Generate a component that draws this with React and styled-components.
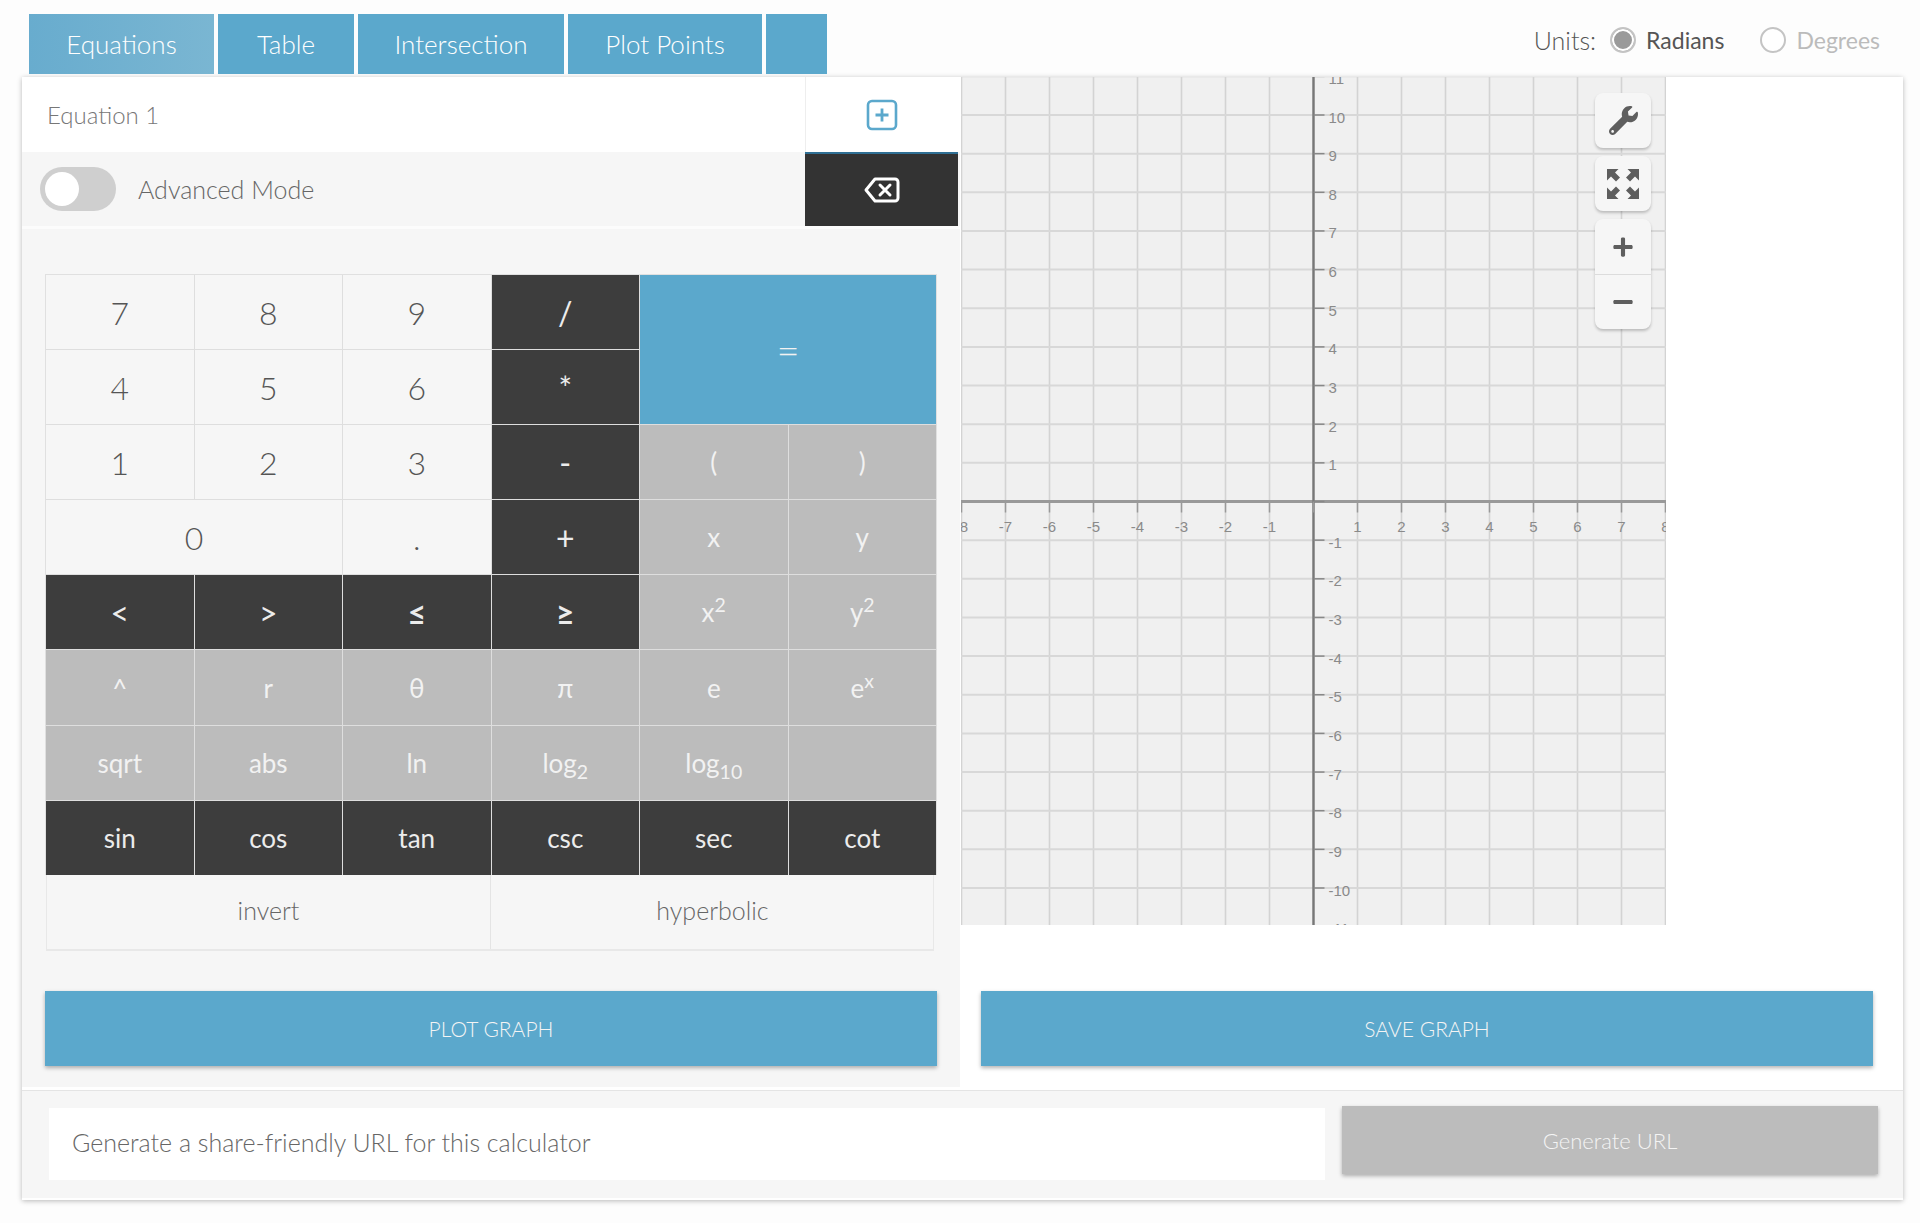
import React from 'react'
import styled, { createGlobalStyle } from 'styled-components'
import { FaWrench, FaPlus, FaMinus } from 'react-icons/fa'

const BLUE = '#5ba8cc'
const DARK = '#3d3d3d'
const GRAY = '#bcbcbc'
const LIGHT = '#f6f6f6'

const GlobalStyle = createGlobalStyle`
  html, body { margin: 0; padding: 0; background: #fdfdfd; }
  body { font-family: Lato, "Open Sans", sans-serif; font-weight: 300; color: #555; }
  * { box-sizing: border-box; }
  sup, sub { font-size: 0.75em; line-height: 0; }
`

const Page = styled.div`
  width: 1920px;
  height: 1223px;
  padding: 14px 0 0 22px;
`

const TopBar = styled.div`
  display: flex;
  justify-content: space-between;
  align-items: center;
  padding: 0 40px 0 7px;
`

const Tabs = styled.div`
  display: grid;
  grid-template-columns: 185px 136px 206px 194px 61px;
  gap: 4px;
`

const Tab = styled.button`
  height: 60px;
  border: none;
  padding: 0;
  color: #fff;
  font: 300 26px Lato, sans-serif;
  background: ${p => (p.$active ? 'linear-gradient(90deg, #68acce, #7ab6d2)' : BLUE)};
`

const Units = styled.div`
  display: flex;
  align-items: center;
  margin-bottom: 8px;
  font-size: 23px;
`

const UnitsLabel = styled.span`
  margin-right: 14px;
  font-size: 25px;
`

const Radio = styled.label`
  display: flex;
  align-items: center;
  gap: 10px;
  margin-left: ${p => (p.$off ? '36px' : '0')};
  color: ${p => (p.$off ? '#bbb' : '#555')};
  font-weight: 400;
`

const RadioDot = styled.span`
  width: 26px;
  height: 26px;
  border-radius: 50%;
  border: 2px solid #c4c4c4;
  background: ${p => (p.$checked ? '#9a9a9a' : '#fff')};
  box-shadow: ${p => (p.$checked ? 'inset 0 0 0 2px #fff' : 'none')};
`

const Panel = styled.div`
  width: 1881px;
  margin-top: 3px;
  background: #fff;
  box-shadow: 0 1px 5px rgba(0, 0, 0, 0.28);
`

const Columns = styled.div`
  display: grid;
  grid-template-columns: 938px 1fr;
  height: 1010px;
`

const LeftColumn = styled.div`
  background: ${LIGHT};
`

const EquationRow = styled.div`
  display: grid;
  grid-template-columns: 783px 153px;
  height: 75px;
  background: #fff;
`

const EquationInput = styled.input`
  border: none;
  outline: none;
  padding: 0 0 0 25px;
  font: 300 24px Lato, sans-serif;
  background: #fff;
  &::placeholder { color: #777; opacity: 1; }
`

const AddButton = styled.button`
  display: flex;
  align-items: center;
  justify-content: center;
  border: none;
  border-left: 1px solid #eee;
  background: #fff;
  padding: 0;
`

const ModeRow = styled.div`
  display: grid;
  grid-template-columns: 783px 153px;
  height: 77px;
  border-bottom: 3px solid #fcfcfc;
`

const ModeSwitch = styled.div`
  display: flex;
  align-items: center;
  gap: 22px;
  padding-left: 18px;
  font-size: 25px;
  color: #666;
`

const Toggle = styled.span`
  display: block;
  width: 76px;
  height: 44px;
  padding: 5px;
  border-radius: 22px;
  background: #cfcfcf;
`

const ToggleKnob = styled.span`
  display: block;
  width: 34px;
  height: 34px;
  border-radius: 50%;
  background: #fff;
`

const BackspaceButton = styled.button`
  display: flex;
  align-items: center;
  justify-content: center;
  height: 74px;
  border: none;
  border-top: 2px solid #2f6f94;
  background: #333;
  padding: 0;
`

const Keypad = styled.div`
  display: grid;
  grid-template-columns: repeat(6, 1fr);
  grid-auto-rows: 74.1px;
  gap: 1px;
  width: 892px;
  margin: 45px 0 0 23px;
  border: 1px solid #e0e0e0;
  border-bottom: none;
  background: #dedede;
`

const keyColors = {
  light: `background: ${LIGHT}; color: #555; font-size: 32px;`,
  dark: `background: ${DARK}; color: #ececec; font-size: 26px; font-weight: 400;`,
  gray: `background: ${GRAY}; color: #f2f2f2; font-size: 26px; font-weight: 400;`,
  blue: `background: ${BLUE}; color: #f2f2f2; font-size: 40px;`,
}

const Key = styled.button`
  border: none;
  padding: 0;
  font-family: Lato, sans-serif;
  font-weight: 300;
  grid-column: span ${p => p.$cols || 1};
  grid-row: span ${p => p.$rows || 1};
  ${p => keyColors[p.$kind]}
  ${p => p.$symbol && 'font-size: 32px;'}
  ${p => p.$bold && 'font-weight: 700;'}
`

const ModeKeys = styled.div`
  display: grid;
  grid-template-columns: 443px 444px;
  width: 888px;
  height: 76px;
  margin-left: 24px;
  border: 1px solid #e8e8e8;
  border-top: none;
  border-bottom-width: 2px;
`

const ModeKey = styled.button`
  padding: 0 0 4px;
  border: none;
  background: transparent;
  color: #666;
  font: 300 25px Lato, sans-serif;
  & + & { border-left: 1px solid #e4e4e4; }
`

const ActionButton = styled.button`
  display: block;
  height: 75px;
  border: none;
  color: #f4f4f4;
  font: 300 21px Lato, sans-serif;
  background: ${BLUE};
  box-shadow: 0 2px 4px rgba(0, 0, 0, 0.3);
`

const PlotButton = styled(ActionButton)`
  width: 892px;
  margin: 40px 0 0 23px;
`

const RightColumn = styled.div`
  position: relative;
  padding-left: 1px;
`

const GraphSvg = styled.svg`
  display: block;
  background: #f0f0f0;
`

const Tools = styled.div`
  position: absolute;
  top: 16px;
  left: 635px;
  display: flex;
  flex-direction: column;
  gap: 8px;
`

const ToolGroup = styled.div`
  display: flex;
  flex-direction: column;
  width: 56px;
  border-radius: 8px;
  background: #f6f6f6;
  box-shadow: 0 2px 3px rgba(0, 0, 0, 0.22);
`

const ToolButton = styled.button`
  display: flex;
  align-items: center;
  justify-content: center;
  height: 55px;
  border: none;
  background: transparent;
  color: #5e5e5e;
  padding: 0;
  & + & { border-top: 1px solid #dcdcdc; }
`

const SaveButton = styled(ActionButton)`
  width: 892px;
  margin: 66px 0 0 20px;
`

const ShareBar = styled.div`
  display: flex;
  align-items: flex-start;
  height: 110px;
  margin-top: 3px;
  padding: 15px 25px 0 27px;
  background: ${LIGHT};
  border-top: 1px solid #e4e4e4;
  border-bottom: 2px solid #fff;
`

const ShareInput = styled.input`
  width: 1276px;
  height: 72px;
  margin-top: 2px;
  padding: 0 0 4px 23px;
  border: none;
  outline: none;
  background: #fff;
  font: 300 25px Lato, sans-serif;
  &::placeholder { color: #666; opacity: 1; }
`

const GenerateButton = styled.button`
  width: 536px;
  height: 68px;
  margin-left: 17px;
  border: none;
  background: ${GRAY};
  color: #f4f4f4;
  font: 300 22px Lato, sans-serif;
  box-shadow: 0 2px 4px rgba(0, 0, 0, 0.3);
`

const keys = [
  ['7', 'light'], ['8', 'light'], ['9', 'light'], ['/', 'dark', { $symbol: true }], ['=', 'blue', { $cols: 2, $rows: 2 }],
  ['4', 'light'], ['5', 'light'], ['6', 'light'], ['*', 'dark', { $symbol: true }],
  ['1', 'light'], ['2', 'light'], ['3', 'light'], ['-', 'dark', { $symbol: true }], ['(', 'gray'], [')', 'gray'],
  ['0', 'light', { $cols: 2 }], ['.', 'light'], ['+', 'dark', { $symbol: true }], ['x', 'gray'], ['y', 'gray'],
  ['<', 'dark', { $symbol: true }], ['>', 'dark', { $symbol: true }], ['≤', 'dark', { $bold: true, $symbol: true }], ['≥', 'dark', { $bold: true, $symbol: true }],
  [<>x<sup>2</sup></>, 'gray'], [<>y<sup>2</sup></>, 'gray'],
  ['^', 'gray'], ['r', 'gray'], ['θ', 'gray'], ['π', 'gray'], ['e', 'gray'], [<>e<sup>x</sup></>, 'gray'],
  ['sqrt', 'gray'], ['abs', 'gray'], ['ln', 'gray'], [<>log<sub>2</sub></>, 'gray'], [<>log<sub>10</sub></>, 'gray'], ['', 'gray'],
  ['sin', 'dark'], ['cos', 'dark'], ['tan', 'dark'], ['csc', 'dark'], ['sec', 'dark'], ['cot', 'dark'],
]

// graph scale, px per unit
const W = 705
const H = 848
const X0 = 352.5
const Y0 = 424.5
const UX = 44
const UY = 38.65

function Graph() {
  const xs = []
  for (let i = -8; i <= 8; i++) xs.push(i)
  const ys = []
  for (let i = -11; i <= 11; i++) ys.push(i)
  return (
    <GraphSvg width={W} height={H} viewBox={`0 0 ${W} ${H}`}>
      {xs.map(i => (
        <line key={i} x1={X0 + i * UX} x2={X0 + i * UX} y1={0} y2={H} stroke="#d3d3d3" strokeWidth="1.6" />
      ))}
      {ys.map(i => (
        <line key={i} x1={0} x2={W} y1={Y0 - i * UY} y2={Y0 - i * UY} stroke="#d8d8d8" strokeWidth="2" />
      ))}
      <line x1={0} x2={W} y1={Y0} y2={Y0} stroke="#999" strokeWidth="3" />
      <line x1={X0} x2={X0} y1={0} y2={H} stroke="#777" strokeWidth="2.4" />
      {xs.map(i => (
        <g key={i}>
          <line x1={X0 + i * UX} x2={X0 + i * UX} y1={Y0} y2={Y0 + 11} stroke="#999" strokeWidth="1.5" />
          {i !== 0 && (
            <text x={X0 + i * UX} y={Y0 + 30} textAnchor="middle" fontFamily="Liberation Sans" fontSize="15" fill="#8a8a8a">
              {i}
            </text>
          )}
        </g>
      ))}
      {ys.map(i => (
        <g key={i}>
          <line x1={X0} x2={X0 + 11} y1={Y0 - i * UY} y2={Y0 - i * UY} stroke="#888" strokeWidth="1.5" />
          {i !== 0 && (
            <text x={X0 + 15} y={Y0 - i * UY + 7.5} fontFamily="Liberation Sans" fontSize="15" fill="#8a8a8a">
              {i}
            </text>
          )}
        </g>
      ))}
    </GraphSvg>
  )
}

function AddIcon() {
  return (
    <svg width="32" height="32" viewBox="0 0 32 32" fill="none" stroke={BLUE} strokeWidth="2.6">
      <rect x="2" y="2" width="28" height="28" rx="4" />
      <path d="M16 9.5v13M9.5 16h13" strokeWidth="2.8" />
    </svg>
  )
}

function BackspaceIcon() {
  return (
    <svg width="36" height="26" viewBox="0 0 36 26" fill="none" stroke="#fff" strokeWidth="3" strokeLinejoin="round">
      <path d="M11 2h20a3 3 0 0 1 3 3v16a3 3 0 0 1-3 3H11L2 13z" />
      <path d="M16 8l10 10M26 8L16 18" strokeLinecap="round" />
    </svg>
  )
}

// four separate corner arrows, FaExpandArrowsAlt runs them together
function ExpandIcon() {
  const arrow = 'M0 0h11.5L8 3.5l5 5-4 4-5-5L0 11.5z'
  return (
    <svg width="32" height="30" viewBox="0 0 32 30" fill="currentColor">
      <path d={arrow} />
      <path d={arrow} transform="translate(32 0) scale(-1 1)" />
      <path d={arrow} transform="translate(0 30) scale(1 -1)" />
      <path d={arrow} transform="translate(32 30) scale(-1 -1)" />
    </svg>
  )
}

export default function App() {
  return (
    <Page>
      <GlobalStyle />
      <TopBar>
        <Tabs>
          <Tab $active>Equations</Tab>
          <Tab>Table</Tab>
          <Tab>Intersection</Tab>
          <Tab>Plot Points</Tab>
          <Tab />
        </Tabs>
        <Units>
          <UnitsLabel>Units:</UnitsLabel>
          <Radio><RadioDot $checked />Radians</Radio>
          <Radio $off><RadioDot />Degrees</Radio>
        </Units>
      </TopBar>
      <Panel>
        <Columns>
          <LeftColumn>
            <EquationRow>
              <EquationInput placeholder="Equation 1" />
              <AddButton><AddIcon /></AddButton>
            </EquationRow>
            <ModeRow>
              <ModeSwitch>
                <Toggle><ToggleKnob /></Toggle>
                Advanced Mode
              </ModeSwitch>
              <BackspaceButton><BackspaceIcon /></BackspaceButton>
            </ModeRow>
            <Keypad>
              {keys.map(([label, kind, extra], i) => (
                <Key key={i} $kind={kind} {...extra}>{label}</Key>
              ))}
            </Keypad>
            <ModeKeys>
              <ModeKey>invert</ModeKey>
              <ModeKey>hyperbolic</ModeKey>
            </ModeKeys>
            <PlotButton>PLOT GRAPH</PlotButton>
          </LeftColumn>
          <RightColumn>
            <Graph />
            <Tools>
              <ToolGroup><ToolButton><FaWrench size={29} /></ToolButton></ToolGroup>
              <ToolGroup><ToolButton><ExpandIcon /></ToolButton></ToolGroup>
              <ToolGroup>
                <ToolButton><FaPlus size={22} /></ToolButton>
                <ToolButton><FaMinus size={22} /></ToolButton>
              </ToolGroup>
            </Tools>
            <SaveButton>SAVE GRAPH</SaveButton>
          </RightColumn>
        </Columns>
        <ShareBar>
          <ShareInput placeholder="Generate a share-friendly URL for this calculator" />
          <GenerateButton>Generate URL</GenerateButton>
        </ShareBar>
      </Panel>
    </Page>
  )
}
